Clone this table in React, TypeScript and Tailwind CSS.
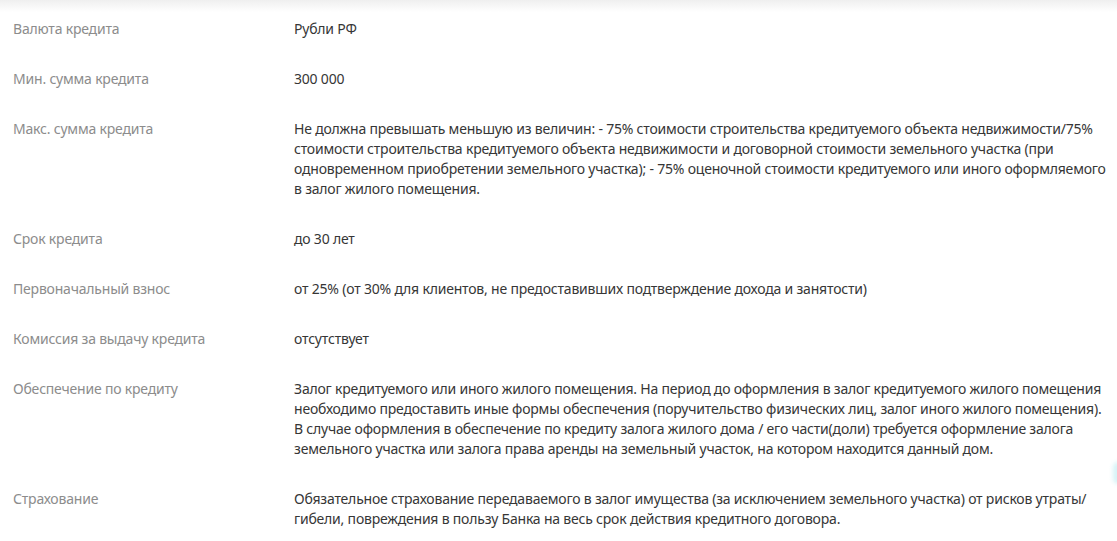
import React from "react";

const rows: { label: string; lines: string[] }[] = [
  { label: "Валюта кредита", lines: ["Рубли РФ"] },
  { label: "Мин. сумма кредита", lines: ["300 000"] },
  {
    label: "Макс. сумма кредита",
    lines: [
      "Не должна превышать меньшую из величин: - 75% стоимости строительства кредитуемого объекта недвижимости/75%",
      "стоимости строительства кредитуемого объекта недвижимости и договорной стоимости земельного участка (при",
      "одновременном приобретении земельного участка); - 75% оценочной стоимости кредитуемого или иного оформляемого",
      "в залог жилого помещения.",
    ],
  },
  { label: "Срок кредита", lines: ["до 30 лет"] },
  {
    label: "Первоначальный взнос",
    lines: ["от 25% (от 30% для клиентов, не предоставивших подтверждение дохода и занятости)"],
  },
  { label: "Комиссия за выдачу кредита", lines: ["отсутствует"] },
  {
    label: "Обеспечение по кредиту",
    lines: [
      "Залог кредитуемого или иного жилого помещения. На период до оформления в залог кредитуемого жилого помещения",
      "необходимо предоставить иные формы обеспечения (поручительство физических лиц, залог иного жилого помещения).",
      "В случае оформления в обеспечение по кредиту залога жилого дома / его части(доли) требуется оформление залога",
      "земельного участка или залога права аренды на земельный участок, на котором находится данный дом.",
    ],
  },
  {
    label: "Страхование",
    lines: [
      "Обязательное страхование передаваемого в залог имущества (за исключением земельного участка) от рисков утраты/",
      "гибели, повреждения в пользу Банка на весь срок действия кредитного договора.",
    ],
  },
];

export default function App() {
  return (
    <div
      className="relative w-[1117px] h-[541px] overflow-hidden bg-white"
      style={{ fontFamily: '"Noto Sans", "Open Sans", sans-serif' }}
    >
      <div className="h-[12px] bg-gradient-to-b from-[#efefef] to-white" />
      <div className="-mt-[8px]">
        {rows.map((r) => (
          <div key={r.label} className="flex py-[15px] text-[14px] leading-[20px] tracking-[-0.2px]">
            <div className="w-[294px] shrink-0 pl-[13px] text-[#8c8c8c]">{r.label}</div>
            <div className="text-[#363636]">
              {r.lines.map((l, i) => (
                <div key={i} className="whitespace-nowrap">
                  {l}
                </div>
              ))}
            </div>
          </div>
        ))}
      </div>
      <div className="absolute right-[-6px] top-[462px] h-[22px] w-[10px] rounded-full bg-[#d6f3f7] blur-[2px]" />
    </div>
  );
}
